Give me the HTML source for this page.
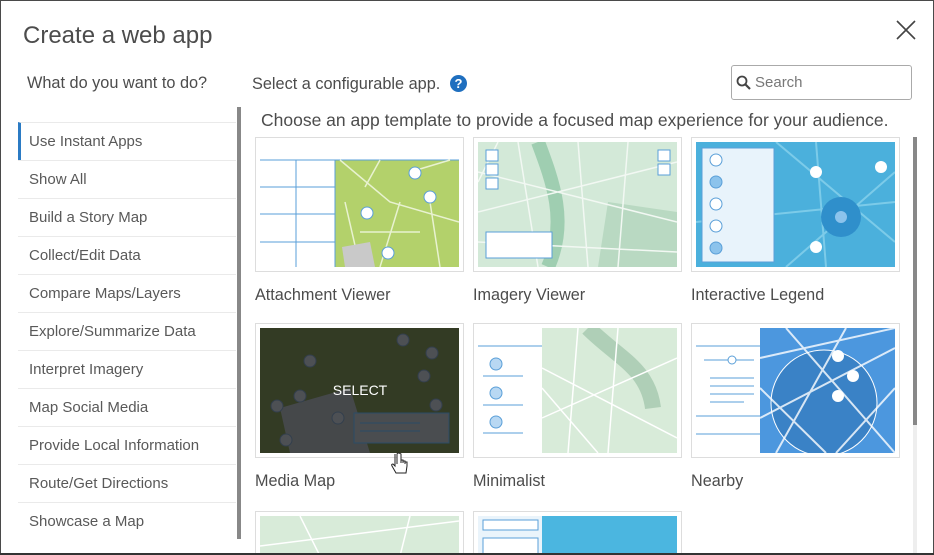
<!DOCTYPE html>
<html><head><style>
*{margin:0;padding:0;box-sizing:border-box}
html,body{width:934px;height:555px;overflow:hidden}
body{background:#fff;font-family:"Liberation Sans",sans-serif;color:#4c4c4c;position:relative}
.frame{position:absolute;left:0;top:0;width:934px;height:555px;border:1px solid #4a4a4a;border-bottom:2px solid #333;z-index:5;pointer-events:none}
.abs{position:absolute}
h1{position:absolute;left:23px;top:22px;font-size:24px;font-weight:normal;color:#4c4c4c}
.close{position:absolute;left:896px;top:20px}
.q{font-size:16.3px;color:#4c4c4c}
.side{position:absolute;left:18px;top:122px;width:218px}
.side div{height:38px;border-top:1px solid #eaeaea;padding-left:11px;line-height:37px;font-size:15px;color:#595959}
.side div.act{border-left:3px solid #2b7bc4;padding-left:8px}
.card{position:absolute;width:209px;height:135px;border:1px solid #ddd;background:#fff;overflow:hidden}
.card svg{position:absolute;left:4px;top:4px;width:199px;height:125px}
.lbl{position:absolute;font-size:16.2px;color:#4c4c4c}
.clip{position:absolute;left:0;top:0;width:934px;height:553px;overflow:hidden}
</style></head><body>
<div class="clip">
<div class="frame"></div>
<h1>Create a web app</h1>
<svg class="close" width="20" height="20" viewBox="0 0 20 20"><path d="M1 1L19 19M19 1L1 19" stroke="#444" stroke-width="1.6"/></svg>
<div class="abs q" style="left:27px;top:74px">What do you want to do?</div>
<div class="abs q" style="left:252px;top:75px">Select a configurable app.</div>
<div class="abs" style="left:450px;top:75px;width:17px;height:17px;border-radius:50%;background:#1f6fbf;color:#fff;font-size:13px;font-weight:bold;text-align:center;line-height:17px">?</div>
<div class="abs" style="left:731px;top:65px;width:181px;height:35px;border:1px solid #aaa;border-radius:3px"></div>
<svg class="abs" style="left:736px;top:75px" width="16" height="16" viewBox="0 0 16 16"><circle cx="6" cy="6" r="4.5" fill="none" stroke="#444" stroke-width="1.8"/><path d="M9.5 9.5L14 14" stroke="#444" stroke-width="2.2"/></svg>
<div class="abs" style="left:755px;top:74px;font-size:15px;color:#777">Search</div>
<div class="abs" style="left:237px;top:107px;width:4px;height:432px;background:#888"></div>
<div class="side">
<div class="act">Use Instant Apps</div><div>Show All</div><div>Build a Story Map</div><div>Collect/Edit Data</div><div>Compare Maps/Layers</div><div>Explore/Summarize Data</div><div>Interpret Imagery</div><div>Map Social Media</div><div>Provide Local Information</div><div>Route/Get Directions</div><div>Showcase a Map</div>
</div>
<div class="abs" style="left:261px;top:110px;font-size:17.5px;color:#4c4c4c;white-space:nowrap">Choose an app template to provide a focused map experience for your audience.</div>
<div class="abs" style="left:913px;top:137px;width:4px;height:416px;background:#eee"></div>
<div class="abs" style="left:913px;top:137px;width:4px;height:288px;background:#888"></div>

<div class="card" style="left:255px;top:137px"><svg viewBox="0 0 199 125"><rect width="199" height="125" fill="#fff"/><rect x="75" y="18" width="124" height="107" fill="#b3d16b"/><path d="M0 18H199M0 45H75M0 72H75M0 100H75M36 18V125M75 18V125" stroke="#5a9fd8" stroke-width="1"/><path d="M80 18L130 60L199 80M120 18L105 45M150 30L190 18M140 60L120 125M100 90L160 90M170 60L180 125M85 60L100 125" stroke="#e8f2d0" stroke-width="1.5" fill="none"/><path d="M82 105L110 100L115 125H85Z" fill="#c9c9c9"/><g fill="#fff" stroke="#5a9fd8"><circle cx="155" cy="31" r="6"/><circle cx="170" cy="55" r="6"/><circle cx="107" cy="71" r="6"/><circle cx="128" cy="111" r="6"/></g></svg></div>
<div class="lbl" style="left:255px;top:286px">Attachment Viewer</div>
<div class="card" style="left:473px;top:137px"><svg viewBox="0 0 199 125"><rect width="199" height="125" fill="#d3e9d8"/><path d="M60 0C75 40 90 80 70 125" stroke="#9fceb1" stroke-width="14" fill="none"/><path d="M130 60L199 70V125H120Z" fill="#b9d9c2"/><path d="M0 30L199 80M0 70L199 20M40 0L60 125M100 0L110 125M150 0L140 125M0 100L199 110M20 0L0 40" stroke="#f2f8f3" stroke-width="1.5" fill="none"/><g fill="#fff" stroke="#5a9fd8"><rect x="8" y="8" width="12" height="11"/><rect x="8" y="22" width="12" height="11"/><rect x="8" y="36" width="12" height="11"/><rect x="180" y="8" width="12" height="11"/><rect x="180" y="22" width="12" height="11"/><rect x="8" y="90" width="66" height="26"/></g></svg></div>
<div class="lbl" style="left:473px;top:286px">Imagery Viewer</div>
<div class="card" style="left:691px;top:137px"><svg viewBox="0 0 199 125"><rect width="199" height="125" fill="#4bb0dc"/><path d="M80 0L199 100M90 125L199 30M120 0L130 125M0 80L199 60" stroke="#7ccbe9" stroke-width="2" fill="none"/><circle cx="145" cy="75" r="20" fill="#2f8fcb"/><rect x="6" y="6" width="72" height="114" fill="#e8f3fb" stroke="#5a9fd8"/><g stroke="#5a9fd8" fill="#fff"><circle cx="20" cy="18" r="6"/><circle cx="20" cy="40" r="6" fill="#8cc3ec"/><circle cx="20" cy="62" r="6"/><circle cx="20" cy="84" r="6"/><circle cx="20" cy="106" r="6" fill="#8cc3ec"/></g><g fill="#fff"><circle cx="120" cy="30" r="6"/><circle cx="185" cy="25" r="6"/><circle cx="120" cy="105" r="6"/><circle cx="145" cy="75" r="6" fill="#8cc3ec"/></g></svg></div>
<div class="lbl" style="left:691px;top:286px">Interactive Legend</div>

<div class="card" style="left:255px;top:323px"><svg viewBox="0 0 199 125"><rect width="199" height="125" fill="#333b24"/><path d="M20 80L90 60L110 125H30Z" fill="#45484a"/><rect x="94" y="85" width="95" height="30" fill="#4a4d50" stroke="#2b4b66"/><path d="M100 95H160M100 103H160" stroke="#2b4b66"/><g fill="#4d5054" stroke="#333f4d"><circle cx="50" cy="33" r="6"/><circle cx="143" cy="12" r="6"/><circle cx="172" cy="25" r="6"/><circle cx="164" cy="48" r="6"/><circle cx="176" cy="77" r="6"/><circle cx="40" cy="68" r="6"/><circle cx="17" cy="78" r="6"/><circle cx="78" cy="90" r="6"/><circle cx="26" cy="112" r="6"/></g><text x="100" y="67" fill="#fff" font-family="Liberation Sans" font-size="14" text-anchor="middle">SELECT</text></svg></div>
<svg class="abs" style="left:391px;top:452px" width="18" height="24" viewBox="0 0 18 24"><path d="M4 2V14L2 12Q0 12 1 14L5 21H15L16 14V10H14V12V9H12V11V8H10V11V2Q7 0 6 2V12" fill="#fff" stroke="#222"/></svg>
<div class="lbl" style="left:255px;top:472px">Media Map</div>
<div class="card" style="left:473px;top:323px"><svg viewBox="0 0 199 125"><rect width="199" height="125" fill="#fff"/><rect x="64" width="135" height="125" fill="#d8ebd9"/><path d="M110 0C140 30 170 40 175 80" stroke="#afcfb7" stroke-width="16" fill="none"/><path d="M64 40L199 110M64 90L199 30M100 0L90 125M140 0L130 125M64 60L120 125" stroke="#fff" stroke-width="1.5" fill="none"/><path d="M0 18H64M5 48H45M5 77H45M5 105H45" stroke="#5a9fd8"/><g fill="#b8d8f3" stroke="#5a9fd8"><circle cx="18" cy="36" r="6"/><circle cx="18" cy="65" r="6"/><circle cx="18" cy="94" r="6"/></g></svg></div>
<div class="lbl" style="left:473px;top:472px">Minimalist</div>
<div class="card" style="left:691px;top:323px"><svg viewBox="0 0 199 125"><rect width="199" height="125" fill="#fff"/><rect x="64" width="135" height="125" fill="#4c97de"/><circle cx="128" cy="75" r="53" fill="#3a82c6" stroke="#fff"/><path d="M64 30L199 0M64 90L199 20M90 0L199 125M64 60L130 125M150 0L80 125M199 60L140 125" stroke="#fff" stroke-width="2" opacity=".8" fill="none"/><path d="M0 18H64M8 32H58M14 50H58M14 58H58M14 66H58M14 74H48M0 88H64M0 106H64" stroke="#5a9fd8"/><circle cx="36" cy="32" r="4" fill="#fff" stroke="#5a9fd8"/><g fill="#fff"><circle cx="142" cy="28" r="6"/><circle cx="157" cy="48" r="6"/><circle cx="142" cy="68" r="6"/></g></svg></div>
<div class="lbl" style="left:691px;top:472px">Nearby</div>

<div class="card" style="left:255px;top:511px;height:42px;border-bottom:none"><svg viewBox="0 0 199 125"><rect width="199" height="125" fill="#d8ebd9"/><path d="M0 30L199 5M40 0L60 40M150 0L140 40" stroke="#fff" stroke-width="1.5"/></svg></div>
<div class="card" style="left:473px;top:511px;height:42px;border-bottom:none"><svg viewBox="0 0 199 125"><rect width="199" height="125" fill="#4bb6e0"/><rect width="64" height="125" fill="#eaf4fb"/><rect x="5" y="4" width="55" height="10" fill="#fff" stroke="#5a9fd8"/><rect x="5" y="22" width="55" height="40" fill="#fff" stroke="#5a9fd8"/></svg></div>
</div>
<div style="position:absolute;left:0;top:553px;width:934px;height:2px;background:#333"></div>
</body></html>
